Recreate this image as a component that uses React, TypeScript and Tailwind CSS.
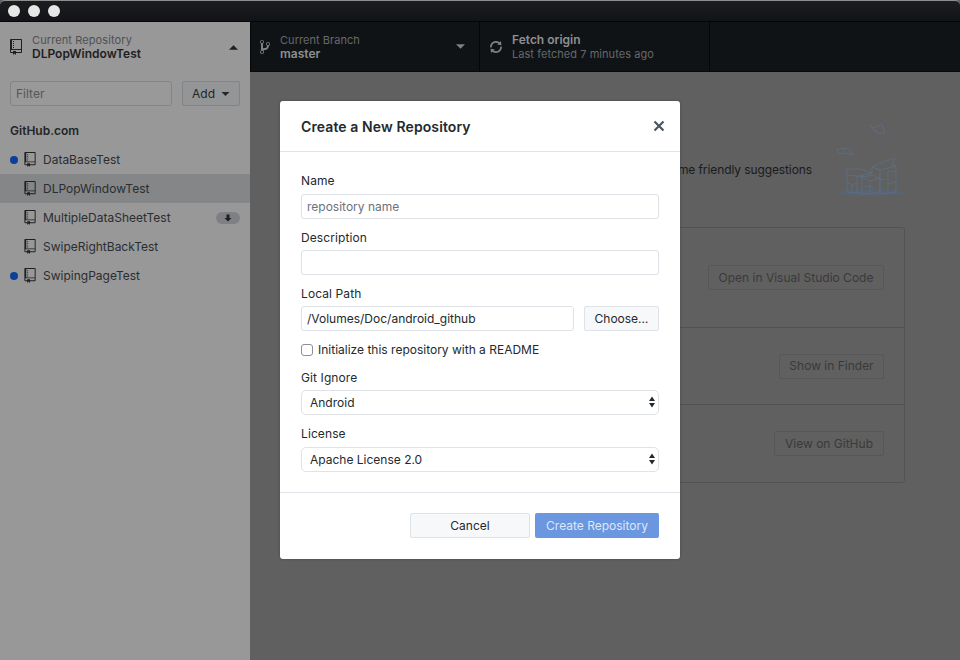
const REPO_PATH =
  'M4 9H3V8h1v1zm0-3H3v1h1V6zm0-2H3v1h1V4zm0-2H3v1h1V2zm8-1v12c0 .55-.45 1-1 1H6v2l-1.5-1.5L3 16v-2H1c-.55 0-1-.45-1-1V1c0-.55.45-1 1-1h10c.55 0 1 .45 1 1zm-1 10H1v2h2v-1h3v1h5v-2zm0-10H2v9h9V1z';
const BRANCH_PATH =
  'M10 5c0-1.11-.89-2-2-2a1.993 1.993 0 0 0-1 3.72v.3c-.02.52-.23.98-.63 1.38-.4.4-.86.61-1.38.63-.83.02-1.48.16-2 .45V4.72a1.993 1.993 0 0 0 1-1.72C4 1.89 3.11 1 2 1 .88 1 0 1.89 0 3a2 2 0 0 0 1 1.72v6.56c-.59.35-1 .99-1 1.72 0 1.11.89 2 2 2 1.11 0 2-.89 2-2 0-.53-.2-1-.53-1.36.09-.06.48-.41.59-.47.25-.11.56-.17.94-.17 1.05-.05 1.95-.45 2.75-1.25S8.95 7.77 9 6.73h-.02C9.59 6.37 10 5.73 10 5zM2 1.8c.66 0 1.2.55 1.2 1.2 0 .65-.55 1.2-1.2 1.2C1.35 4.2.8 3.65.8 3c0-.65.55-1.2 1.2-1.2zm0 12.41c-.66 0-1.2-.55-1.2-1.2 0-.65.55-1.2 1.2-1.2.65 0 1.2.55 1.2 1.2 0 .65-.55 1.2-1.2 1.2zm6-8c-.66 0-1.2-.55-1.2-1.2 0-.65.55-1.2 1.2-1.2.65 0 1.2.55 1.2 1.2 0 .65-.55 1.2-1.2 1.2z';
const SYNC_PATH =
  'M10.24 7.4a4.15 4.15 0 0 1-1.2 3.6 4.346 4.346 0 0 1-5.41.54L4.8 10.4.5 9.8l.6 4.2 1.31-1.26c2.36 1.74 5.7 1.57 7.84-.54a5.876 5.876 0 0 0 1.74-4.46l-1.75-.34zM2.96 5a4.346 4.346 0 0 1 5.41-.54L7.2 5.6l4.3.6-.6-4.2-1.31 1.26c-2.36-1.74-5.7-1.57-7.85.54C.5 5.03-.06 6.65.01 8.26l1.75.35A4.17 4.17 0 0 1 2.96 5z';

const repos = [
  { name: 'DataBaseTest', dot: true },
  { name: 'DLPopWindowTest', selected: true },
  { name: 'MultipleDataSheetTest', behind: true },
  { name: 'SwipeRightBackTest' },
  { name: 'SwipingPageTest', dot: true },
];

function RepoIcon({ className }: { className: string }) {
  return (
    <svg viewBox="0 0 12 16" className={className} fill="currentColor">
      <path fillRule="evenodd" d={REPO_PATH} />
    </svg>
  );
}

function Caret({ up, className }: { up?: boolean; className: string }) {
  return (
    <svg viewBox="0 0 10 5" className={className} fill="currentColor">
      <path d={up ? 'M0 5 5 0l5 5z' : 'M0 0h10L5 5z'} />
    </svg>
  );
}

function Sidebar() {
  return (
    <aside className="flex w-[250px] shrink-0 flex-col bg-[#989898]">
      <div className="flex h-[50px] items-center pl-[10px] pr-[12px]">
        <RepoIcon className="h-[16px] w-[12px] text-[#1d1f22]" />
        <div className="ml-[10px] flex-1 pt-[1px]">
          <div className="text-[11px] leading-[13px] tracking-[0.1px] text-[#4e5054]">Current Repository</div>
          <div className="text-[12px] leading-[14px] font-semibold text-[#1d1f22]">DLPopWindowTest</div>
        </div>
        <Caret up className="h-[5px] w-[9px] text-[#1d1f22]" />
      </div>
      <div className="mt-[9px] flex gap-[10px] px-[10px]">
        <input
          placeholder="Filter"
          className="h-[25px] w-[162px] rounded-[3px] border border-[#848484] bg-[#999999] px-[5px] text-[12px] text-[#1d1f22] outline-none placeholder:text-[#55575a]"
        />
        <button className="flex h-[25px] w-[58px] items-center justify-center gap-[6px] rounded-[2px] border border-[#848484] bg-[#939597] text-[12px] text-[#232528]">
          Add
          <Caret className="h-[4px] w-[9px] text-[#232528]" />
        </button>
      </div>
      <div className="mt-[17px] px-[10px] text-[12px] leading-[16px] font-semibold text-[#232528]">GitHub.com</div>
      <ul className="mt-[6px]">
        {repos.map((repo) => (
          <li
            key={repo.name}
            className={`flex h-[29px] items-center pl-[10px] pr-[10px] ${repo.selected ? 'bg-[#848688]' : ''}`}
          >
            <span className={`size-[8px] rounded-full ${repo.dot ? 'bg-[#0b3f98]' : ''}`} />
            <RepoIcon className="ml-[6px] h-[15px] w-[12px] text-[#1d1f22]" />
            <span className="ml-[7px] flex-1 text-[12px] text-[#2b2d30]">{repo.name}</span>
            {repo.behind && (
              <span className="flex h-[12px] w-[24px] items-center justify-center rounded-full bg-[#7e8084]">
                <svg viewBox="0 0 8 8" className="size-[8px] text-[#1d1f22]" fill="currentColor">
                  <path d="M2.5 0.5h3V4H7.5L4 7.5 0.5 4h2z" />
                </svg>
              </span>
            )}
          </li>
        ))}
      </ul>
    </aside>
  );
}

function Toolbar() {
  return (
    <div className="flex h-[50px] shrink-0 border-b border-[#08090a] bg-[#101316] text-[#8d8f91]">
      <div className="flex w-[230px] items-center border-r border-l border-[#050608] pl-[9px] pr-[14px]">
        <svg viewBox="0 0 10 16" className="h-[16px] w-[10px] text-[#7f8183]" fill="currentColor">
          <path fillRule="evenodd" d={BRANCH_PATH} />
        </svg>
        <div className="ml-[10px] flex-1 pt-[1px]">
          <div className="text-[11px] leading-[13px] tracking-[0.05px] text-[#66686b]">Current Branch</div>
          <div className="text-[12px] leading-[14px] font-semibold">master</div>
        </div>
        <Caret className="h-[5px] w-[9px] text-[#7f8183]" />
      </div>
      <div className="flex w-[230px] items-center border-r border-[#050608] pl-[10px]">
        <svg viewBox="0 0 12 16" className="h-[16px] w-[12px] text-[#7f8183]" fill="currentColor">
          <path fillRule="evenodd" d={SYNC_PATH} />
        </svg>
        <div className="ml-[10px] pt-[1px]">
          <div className="text-[12px] leading-[14px] font-semibold">Fetch origin</div>
          <div className="text-[11px] leading-[14px] tracking-[0.05px] text-[#66686b]">Last fetched 7 minutes ago</div>
        </div>
      </div>
    </div>
  );
}

function Boxes() {
  return (
    <svg viewBox="0 0 70 76" className="h-[76px] w-[70px]" fill="none" stroke="#5d6e84" strokeWidth="0.8">
      <ellipse cx="36.5" cy="70.5" rx="33.5" ry="3.5" fill="#586472" stroke="none" />
      {/* birds */}
      <path d="M34 2l4 4 9-4 3 9h-8zM38 6l4 5" />
      <path d="M1 28l7-2 7 2 3 5-8-2-5 1zM8 26l2 5" />
      {/* left box */}
      <path d="M11 47h14l12 4-15 3-10-1zM12 53v17l10 1V54M22 71l5-1M12 60l5 3 5-2M17 63v6M27 55l-5-1M30 52l-4 3" />
      {/* middle box */}
      <path d="M27 55l11-2 7 3v15l-18 1zM27 55l8 4 10-3M35 59v12M29 65l6-1 4 2" />
      {/* right box */}
      <path d="M37 45l11-5 12-4-3 7 4 1v26l-16 2V48zM37 45l8 3 16-4M37 45v7M45 58l6-1M53 50l8-1M53 50v18M53 62l8-2" />
    </svg>
  );
}

function EmptyState() {
  const actions = [
    { label: 'Open in Visual Studio Code', row: 'h-[99px]', width: 'w-[176px]' },
    { label: 'Show in Finder', row: 'h-[77px] border-t', width: 'w-[105px]' },
    { label: 'View on GitHub', row: 'h-[78px] border-t', width: 'w-[110px]' },
  ];

  return (
    <div className="mx-auto w-[600px]">
      <div className="flex h-[155px] items-start justify-end pt-[50px]">
        <p className="mt-[40px] mr-[23px] text-[12px] leading-[16px] tracking-[-0.1px] text-[#191b1e]">
          Here are some friendly suggestions
        </p>
        <Boxes />
      </div>
      <div className="rounded-[3px] border border-[#535353]">
        {actions.map((action) => (
          <div key={action.label} className={`flex items-center justify-end border-[#535353] pr-[20px] ${action.row}`}>
            <button className={`h-[25px] rounded-[2px] border border-[#575757] text-[12px] text-[#3a3a3a] ${action.width}`}>
              {action.label}
            </button>
          </div>
        ))}
      </div>
    </div>
  );
}

function Field({ label, tight, children }: { label: string; tight?: boolean; children: React.ReactNode }) {
  return (
    <div>
      <div className={`h-[16px] text-[12px] leading-[16px] tracking-[0.1px] text-[#24292e] ${tight ? 'mb-[5px]' : 'mb-[4px]'}`}>
        {label}
      </div>
      {children}
    </div>
  );
}

const inputClass =
  'block h-[25px] w-full rounded-[3px] border border-[#dfe2e6] bg-white px-[5px] text-[12px] text-[#24292e] outline-none placeholder:text-[#6a737d]';

function SelectBox({ value }: { value: string }) {
  return (
    <div className="relative">
      <select
        value={value}
        onChange={() => {}}
        className="block h-[25px] w-full appearance-none rounded-[5px] border border-[#dfe2e6] bg-white pl-[8px] text-[12px] text-[#24292e] outline-none"
      >
        <option>{value}</option>
      </select>
      <svg viewBox="0 0 6 12" className="pointer-events-none absolute top-[6px] right-[4px] h-[12px] w-[6px] text-[#24292e]" fill="currentColor">
        <path d="M3 0.5 6 5H0zM0 7h6l-3 4.5z" />
      </svg>
    </div>
  );
}

function NewRepoDialog() {
  return (
    <div className="absolute inset-0 flex items-start justify-center pt-[101px]">
      <div className="h-[458px] w-[400px] rounded-[3px] bg-white shadow-[0_0_3px_rgba(0,0,0,0.25)]">
        <header className="flex h-[51px] items-center justify-between border-b border-[#dfe2e6] pr-[15px] pl-[21px]">
          <h1 className="text-[14px] font-semibold tracking-[0.1px] text-[#24292e]">Create a New Repository</h1>
          <svg viewBox="0 0 12 12" className="size-[12px] text-[#4b5460]" fill="none" stroke="currentColor" strokeWidth="2.2">
            <path d="M1.5 1.5l9 9M10.5 1.5l-9 9" />
          </svg>
        </header>
        <div className="flex flex-col gap-[11px] px-[21px] pt-[21px]">
          <Field label="Name" tight>
            <input placeholder="repository name" className={inputClass} />
          </Field>
          <Field label="Description">
            <input className={inputClass} />
          </Field>
          <Field label="Local Path">
            <div className="flex gap-[10px]">
              <input value="/Volumes/Doc/android_github" readOnly className={`${inputClass} flex-1`} />
              <button className="h-[25px] w-[75px] rounded-[2px] border border-[#dfe2e6] bg-[#f6f8fa] text-[12px] text-[#24292e]">
                Choose…
              </button>
            </div>
          </Field>
          <label className="mb-[1px] flex h-[16px] items-center gap-[5px] text-[12px] text-[#24292e]">
            <span className="size-[12px] rounded-[3px] border border-[#8d8f92] bg-white" />
            Initialize this repository with a README
          </label>
          <Field label="Git Ignore">
            <SelectBox value="Android" />
          </Field>
          <Field label="License" tight>
            <SelectBox value="Apache License 2.0" />
          </Field>
        </div>
        <footer className="mt-[20px] flex justify-end gap-[5px] border-t border-[#dfe2e6] px-[21px] pt-[20px]">
          <button className="h-[25px] w-[120px] rounded-[2px] border border-[#dfe2e6] bg-[#f6f8fa] text-[12px] text-[#24292e]">
            Cancel
          </button>
          <button className="h-[25px] w-[124px] rounded-[2px] bg-[#6b96e0] text-[12px] text-[#dde7f8]">
            Create Repository
          </button>
        </footer>
      </div>
    </div>
  );
}

export default function App() {
  return (
    <div className="relative flex h-[660px] w-[960px] flex-col overflow-hidden bg-[#606060] font-['Inter',sans-serif]">
      <div className="flex h-[22px] shrink-0 items-center gap-[8px] rounded-t-[5px] border-t border-b border-t-[#8f8f8f] border-b-[#050608] bg-gradient-to-b from-[#1c1d21] to-[#111316] pl-[8px]">
        <span className="size-[12px] rounded-full bg-[#e6e6e6]" />
        <span className="size-[12px] rounded-full bg-[#e6e6e6]" />
        <span className="size-[12px] rounded-full bg-[#e6e6e6]" />
      </div>
      <div className="flex min-h-0 flex-1">
        <Sidebar />
        <main className="flex-1">
          <Toolbar />
          <EmptyState />
        </main>
      </div>
      <NewRepoDialog />
    </div>
  );
}
